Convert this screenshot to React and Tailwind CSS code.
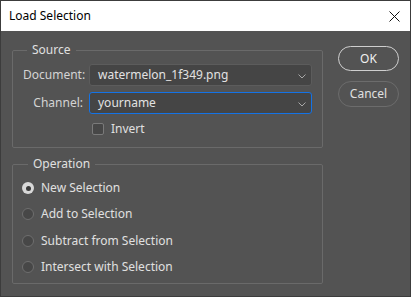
import React from "react";

const Chevron = () => (
  <svg width="8" height="5" viewBox="0 0 8 5" className="absolute right-[5px] top-[9px]">
    <path d="M0.5 0.5 L4 4 L7.5 0.5" fill="none" stroke="#a8a8a8" strokeWidth="1" />
  </svg>
);

const Select = ({ value, focused }) => (
  <div
    className={
      "relative h-[22px] w-[223px] rounded-[3px] border bg-[#454545] pl-[8px] flex items-center text-[#e2e2e2] " +
      (focused ? "border-[#1473e6]" : "border-[#5c5c5c]")
    }
  >
    {value}
    <Chevron />
  </div>
);

const Radio = ({ checked, label }) => (
  <div className="flex items-center h-[16px]">
    {checked ? (
      <div className="w-[12px] h-[12px] rounded-full bg-[#d8d8d8] flex items-center justify-center">
        <div className="w-[5px] h-[5px] rounded-full bg-[#3a3a3a]" />
      </div>
    ) : (
      <div className="w-[12px] h-[12px] rounded-full border border-[#6e6e6e] bg-[#474747]" />
    )}
    <span className="ml-[7px] text-[#e0e0e0]">{label}</span>
  </div>
);

export default function App() {
  return (
    <div
      className="w-[411px] h-[297px] border border-[#3c3c3c] bg-[#535353] flex flex-col text-[12px] leading-[16px]"
      style={{ fontFamily: '"Noto Sans", "Open Sans", sans-serif' }}
    >
      <div className="h-[30px] bg-white flex items-center justify-between pl-[8px] pr-[10px] shrink-0">
        <span className="text-black text-[12px]">Load Selection</span>
        <svg width="11" height="11" viewBox="0 0 11 11">
          <path d="M0.5 0.5 L10.5 10.5 M10.5 0.5 L0.5 10.5" stroke="#111" strokeWidth="1" />
        </svg>
      </div>
      <div className="flex pl-[11px] pt-[11px]">
        <div className="w-[311px] flex flex-col">
          <fieldset className="border border-[#6a6a6a] rounded-[2px] px-[10px] pt-[6px] pb-[10px]">
            <legend className="ml-[4px] px-[5px] text-[#e0e0e0]">Source</legend>
            <div className="flex items-center">
              <span className="w-[60px] text-right text-[#d4d4d4]">Document:</span>
              <div className="ml-[6px]">
                <Select value="watermelon_1f349.png" />
              </div>
            </div>
            <div className="flex items-center mt-[6px]">
              <span className="w-[60px] text-right text-[#d4d4d4]">Channel:</span>
              <div className="ml-[6px]">
                <Select value="yourname" focused />
              </div>
            </div>
            <div className="flex items-center mt-[7px] ml-[69px] h-[16px]">
              <div className="w-[12px] h-[12px] rounded-[2px] border border-[#7a7a7a] bg-[#474747]" />
              <span className="ml-[7px] text-[#e0e0e0]">Invert</span>
            </div>
          </fieldset>
          <fieldset className="mt-[8px] border border-[#6a6a6a] rounded-[2px] pl-[9px] pt-[8px] pb-[8px] flex flex-col gap-[10.33px]">
            <legend className="ml-[6px] px-[5px] text-[#e0e0e0]">Operation</legend>
            <Radio checked label="New Selection" />
            <Radio label="Add to Selection" />
            <Radio label="Subtract from Selection" />
            <Radio label="Intersect with Selection" />
          </fieldset>
        </div>
        <div className="ml-[15px] flex flex-col gap-[10px] pt-[4px]">
          <div className="w-[61px] h-[25px] rounded-full border-[1.5px] border-[#cfcfcf] flex items-center justify-center text-[#f0f0f0]">
            OK
          </div>
          <div className="w-[61px] h-[26px] rounded-full border-[1.5px] border-[#6c6c6c] flex items-center justify-center text-[#e0e0e0]">
            Cancel
          </div>
        </div>
      </div>
    </div>
  );
}
